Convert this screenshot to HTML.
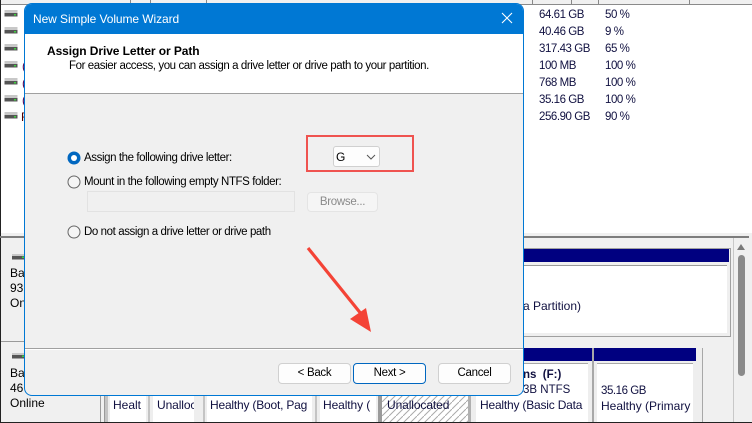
<!DOCTYPE html>
<html><head><meta charset="utf-8">
<style>
html,body{margin:0;padding:0;width:752px;height:423px;overflow:hidden}
body{position:relative;background:#f0f0f0;font-family:"Liberation Sans",sans-serif;font-size:12px;color:#000}
.a{position:absolute;box-sizing:border-box}
.t{position:absolute;white-space:nowrap;line-height:14px}
.s{font-size:11.5px;letter-spacing:-.41px}
.v{font-size:11.5px;letter-spacing:-.45px;color:#101040}
.btn{position:absolute;box-sizing:border-box;background:#fdfdfd;border:1px solid #d0d0d0;border-radius:4px;text-align:center;font-size:11.5px;letter-spacing:-.3px;line-height:19px}
.n{position:absolute;background:#000080}
.w{position:absolute;box-sizing:border-box;background:#fff;overflow:hidden;white-space:nowrap;color:#101040;line-height:14px}
.g{position:absolute;background:#c4c4c4}
</style></head>
<body>
<!-- top list -->
<div class="a" style="left:0;top:0;width:752px;height:233px;background:#fff"></div>
<div class="a" style="left:0;top:0;width:752px;height:5px;background:#f0f0f0;border-bottom:1px solid #8a8a8a"></div>
<div class="a" style="left:130px;top:0;width:1px;height:4px;background:#888"></div>
<div class="a" style="left:150px;top:0;width:1px;height:4px;background:#888"></div>
<div class="a" style="left:206px;top:0;width:1px;height:4px;background:#888"></div>
<div class="a" style="left:532px;top:0;width:1px;height:4px;background:#888"></div>
<div class="a" style="left:571px;top:0;width:1px;height:4px;background:#888"></div>
<div class="a" style="left:598px;top:0;width:1px;height:4px;background:#888"></div>
<div class="a" style="left:689px;top:0;width:1px;height:4px;background:#888"></div>
<div class="a" style="left:0;top:0;width:1px;height:423px;background:#222"></div>

<svg class="a" style="left:4px;top:8px" width="16" height="115" viewBox="0 0 16 115">
<g id="d">
<rect x="0.5" y="2" width="13" height="3" fill="#c8c8c8"/><rect x="0.5" y="5" width="13" height="3.5" fill="#555"/><rect x="10" y="6" width="2" height="1.5" fill="#3fd03f"/>
</g>
<use href="#d" y="17"/><use href="#d" y="34"/><use href="#d" y="51"/><use href="#d" y="68"/><use href="#d" y="85"/><use href="#d" y="102"/>
</svg>
<div class="t" style="left:22px;top:59px;color:#500050">(</div>
<div class="t" style="left:22px;top:76px;color:#500050">(</div>
<div class="t" style="left:22px;top:93px;color:#500050">(</div>
<div class="t" style="left:21px;top:110px;color:#500000">F</div>

<div class="t v" style="left:539px;top:8px">64.61 GB</div><div class="t v" style="left:605px;top:8px">50 %</div>
<div class="t v" style="left:539px;top:25px">40.46 GB</div><div class="t v" style="left:605px;top:25px">9 %</div>
<div class="t v" style="left:539px;top:42px">317.43 GB</div><div class="t v" style="left:605px;top:42px">65 %</div>
<div class="t v" style="left:539px;top:59px">100 MB</div><div class="t v" style="left:605px;top:59px">100 %</div>
<div class="t v" style="left:539px;top:76px">768 MB</div><div class="t v" style="left:605px;top:76px">100 %</div>
<div class="t v" style="left:539px;top:93px">35.16 GB</div><div class="t v" style="left:605px;top:93px">100 %</div>
<div class="t v" style="left:539px;top:110px">256.90 GB</div><div class="t v" style="left:605px;top:110px">90 %</div>

<!-- splitter -->
<div class="a" style="left:0;top:236px;width:749px;height:2px;background:#7d7d7d"></div>

<!-- disk area -->
<div class="a" style="left:1px;top:341px;width:100px;height:1px;background:#9a9a9a"></div>
<div class="a" style="left:100px;top:341px;width:1px;height:82px;background:#9a9a9a"></div>
<div class="a" style="left:104px;top:341px;width:1px;height:82px;background:#9a9a9a"></div>
<div class="a" style="left:733px;top:238px;width:1px;height:185px;background:#c8c8c8"></div>
<svg class="a" style="left:12px;top:252px" width="14" height="10"><rect x="0" y="2" width="13" height="3" fill="#c8c8c8"/><rect x="0" y="4" width="13" height="3.5" fill="#555"/><rect x="10" y="4.5" width="2" height="1.5" fill="#3fd03f"/></svg>
<svg class="a" style="left:12px;top:351px" width="14" height="10"><rect x="0" y="2" width="13" height="3" fill="#c8c8c8"/><rect x="0" y="4" width="13" height="3.5" fill="#555"/><rect x="10" y="4.5" width="2" height="1.5" fill="#3fd03f"/></svg>
<div class="t" style="left:10px;top:266px">Ba</div>
<div class="t" style="left:10px;top:281px">93</div>
<div class="t" style="left:10px;top:296px">On</div>
<div class="t" style="left:10px;top:366px">Ba</div>
<div class="t" style="left:10px;top:381px">46</div>
<div class="t" style="left:10px;top:396px">Online</div>

<!-- upper disk partition -->
<div class="a" style="left:500px;top:248px;width:231px;height:89px;background:#efefef;border:1px solid #a0a0a0;border-left:0"></div>
<div class="n" style="left:500px;top:249px;width:229px;height:13px"></div>
<div class="a" style="left:500px;top:265px;width:227px;height:68px;background:#fff;border-top:1px solid #9a9a9a"></div>
<div class="t" style="left:523px;top:299px;color:#101040;font-size:12px">a Partition)</div>

<!-- lower disk -->
<div class="a" style="left:105px;top:348px;width:598px;height:75px;background:#eee;border-right:1px solid #a8a8a8"></div>
<div class="n" style="left:500px;top:348px;width:92px;height:13px"></div>
<div class="n" style="left:594px;top:348px;width:102px;height:13px"></div>
<div class="g" style="left:592px;top:348px;width:2px;height:75px;background:#a8a8a8"></div>

<div class="g" style="left:105px;top:395px;width:3px;height:28px"></div>
<div class="w" style="left:110px;top:395px;width:36px;height:27px;padding:3px 0 0 3px">Healt</div>
<div class="g" style="left:148px;top:395px;width:2px;height:28px"></div>
<div class="w" style="left:153px;top:395px;width:41px;height:27px;padding:3px 0 0 4px;letter-spacing:-.1px">Unalloc</div>
<div class="g" style="left:203px;top:395px;width:2px;height:28px"></div>
<div class="w" style="left:207px;top:395px;width:105px;height:27px;padding:3px 0 0 3px;letter-spacing:-.2px">Healthy (Boot, Pag</div>
<div class="g" style="left:315px;top:395px;width:2px;height:28px"></div>
<div class="w" style="left:320px;top:395px;width:56px;height:27px;padding:3px 0 0 3px;letter-spacing:-.1px">Healthy (</div>
<div class="g" style="left:378px;top:395px;width:4px;height:28px;background:#9a9a9a"></div>
<svg class="a" style="left:382px;top:395px" width="86" height="28">
<defs><pattern id="h" width="7" height="7" patternUnits="userSpaceOnUse"><path d="M-1 8L8 -1" stroke="#aaa" stroke-width="1"/></pattern></defs>
<rect width="86" height="28" fill="#fff"/><rect width="86" height="28" fill="url(#h)"/></svg>
<div class="t" style="left:387px;top:398px;color:#101040;letter-spacing:-.1px">Unallocated</div>
<div class="g" style="left:468px;top:395px;width:3px;height:28px;background:#b0b0b0"></div>
<div class="w" style="left:476px;top:363px;width:112px;height:60px;border-top:1px solid #a8a8a8"></div>
<div class="t" style="left:523px;top:368px;color:#101040;font-weight:bold;font-size:11.5px">ns&nbsp; (F:)</div>
<div class="t" style="left:523px;top:383px;color:#101040;font-size:11.5px">3B NTFS</div>
<div class="t" style="left:480px;top:398px;color:#101040;letter-spacing:-.2px">Healthy (Basic Data</div>
<div class="w" style="left:597px;top:363px;width:96px;height:60px;border-top:1px solid #a8a8a8;padding:19px 0 0 4px"><span style="font-size:11.5px;letter-spacing:-.45px">35.16 GB</span><br><span style="display:block;margin-top:1px">Healthy (Primary</span></div>

<!-- scrollbar -->
<svg class="a" style="left:736px;top:243px" width="10" height="8"><path d="M1 7L5 1L9 7Z" fill="#7a7a7a"/></svg>
<div class="a" style="left:738px;top:255px;width:7px;height:121px;background:#8a8a8a;border-radius:3.5px"></div>

<div class="a" style="left:0;top:422px;width:752px;height:1px;background:#222"></div>

<!-- dialog -->
<div class="a" style="left:24px;top:3px;width:500px;height:393px;background:#f0f0f0;border:1px solid #0078d4;border-radius:8px;overflow:hidden">
  <div class="a" style="left:0;top:0;width:498px;height:30px;background:#0078d4"></div>
  <div class="a" style="left:0;top:30px;width:498px;height:59px;background:#fff"></div>
  <div class="a" style="left:0;top:89px;width:498px;height:1px;background:#a0a0a0"></div>
  <div class="a" style="left:0;top:344px;width:498px;height:1px;background:#a0a0a0"></div>
  <div class="a" style="left:0;top:345px;width:498px;height:1px;background:#fff"></div>
</div>
<div class="t" style="left:33px;top:12px;color:#fff;font-size:12px;letter-spacing:-.08px">New Simple Volume Wizard</div>
<svg class="a" style="left:500px;top:11px" width="14" height="14"><path d="M2 2L12 12M12 2L2 12" stroke="#fff" stroke-width="1.1" fill="none"/></svg>
<div class="t" style="left:47px;top:44px;font-weight:bold;letter-spacing:-.08px">Assign Drive Letter or Path</div>
<div class="t s" style="left:69px;top:59px">For easier access, you can assign a drive letter or drive path to your partition.</div>

<svg class="a" style="left:67px;top:151px" width="14" height="14"><circle cx="7" cy="7" r="6.5" fill="#0067c0"/><circle cx="7" cy="7" r="3" fill="#fff"/></svg>
<svg class="a" style="left:67px;top:175px" width="14" height="14"><circle cx="7" cy="7" r="6" fill="#f5f5f5" stroke="#666"/></svg>
<svg class="a" style="left:67px;top:225px" width="14" height="14"><circle cx="7" cy="7" r="6" fill="#f5f5f5" stroke="#666"/></svg>
<div class="t s" style="left:84px;top:151px">Assign the following drive letter:</div>
<div class="t s" style="left:84px;top:175px">Mount in the following empty NTFS folder:</div>
<div class="t s" style="left:84px;top:225px">Do not assign a drive letter or drive path</div>
<div class="a" style="left:87px;top:191px;width:208px;height:21px;background:#f0f0f0;border:1px solid #e2e2e2"></div>
<div class="btn" style="left:307px;top:192px;width:71px;height:20px;background:#f5f5f5;border-color:#e4e4e4;color:#8a8a8a;line-height:18px">Browse...</div>

<div class="a" style="left:306px;top:135px;width:108px;height:37px;border:2px solid #ef5350"></div>
<div class="a" style="left:333px;top:146px;width:47px;height:21px;background:#fdfdfd;border:1px solid #d0d0d0;border-radius:3px"></div>
<div class="t" style="left:336px;top:150px;font-size:12px">G</div>
<svg class="a" style="left:366px;top:154px" width="10" height="6"><path d="M1 1L5 5L9 1" stroke="#555" stroke-width="1" fill="none"/></svg>

<svg class="a" style="left:300px;top:240px" width="80" height="100"><path d="M8 8L62 75" stroke="#f44336" stroke-width="3.2" fill="none"/><path d="M66 68L50 79L71 92Z" fill="#f44336"/></svg>

<div class="btn" style="left:278px;top:363px;width:73px;height:21px;">&lt; Back</div>
<div class="btn" style="left:353px;top:363px;width:73px;height:21px;border-color:#0067c0;">Next &gt;</div>
<div class="btn" style="left:438px;top:363px;width:73px;height:21px;">Cancel</div>
</body></html>
